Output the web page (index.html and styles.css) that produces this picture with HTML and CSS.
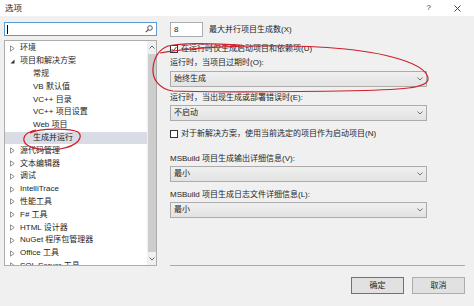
FILE: index.html
```html
<!DOCTYPE html>
<html>

<head>
  <meta charset="utf-8">
  <title>选项</title>
  <link rel="stylesheet" href="styles.css">
</head>

<body>

  <header class="titlebar">
    <span class="title">选项</span>
    <span class="help">?</span>
    <svg class="close" width="7" height="7" viewBox="0 0 7 7">
      <path d="M0.5 0.5L6.5 6.5M6.5 0.5L0.5 6.5" stroke="#333" stroke-width="0.9" fill="none" />
    </svg>
  </header>

  <div class="content">
    <aside class="sidebar">
      <div class="search">
        <span class="caret"></span>
        <svg width="8" height="8" viewBox="0 0 8 8">
          <circle cx="5" cy="3" r="2.3" stroke="#444" stroke-width="0.9" fill="none" />
          <path d="M3.4 4.6L0.8 7.2" stroke="#444" stroke-width="1.1" />
        </svg>
      </div>

      <div class="tree">
        <ul class="nodes">
          <li class="node"><span class="twisty"><svg width="5" height="7" viewBox="0 0 5 7"><path d="M0.5 0.8L4.2 3.5L0.5 6.2Z" fill="none" stroke="#777" stroke-width="0.8" /></svg></span>环境</li>
          <li class="node"><span class="twisty"><svg width="5" height="5" viewBox="0 0 5 5"><path d="M4.5 0.5L4.5 4.5L0.5 4.5Z" fill="#333" /></svg></span>项目和解决方案</li>
          <li class="node child">常规</li>
          <li class="node child">VB 默认值</li>
          <li class="node child">VC++ 目录</li>
          <li class="node child">VC++ 项目设置</li>
          <li class="node child">Web 项目</li>
          <li class="node child selected">生成并运行</li>
          <li class="node"><span class="twisty"><svg width="5" height="7" viewBox="0 0 5 7"><path d="M0.5 0.8L4.2 3.5L0.5 6.2Z" fill="none" stroke="#777" stroke-width="0.8" /></svg></span>源代码管理</li>
          <li class="node"><span class="twisty"><svg width="5" height="7" viewBox="0 0 5 7"><path d="M0.5 0.8L4.2 3.5L0.5 6.2Z" fill="none" stroke="#777" stroke-width="0.8" /></svg></span>文本编辑器</li>
          <li class="node"><span class="twisty"><svg width="5" height="7" viewBox="0 0 5 7"><path d="M0.5 0.8L4.2 3.5L0.5 6.2Z" fill="none" stroke="#777" stroke-width="0.8" /></svg></span>调试</li>
          <li class="node"><span class="twisty"><svg width="5" height="7" viewBox="0 0 5 7"><path d="M0.5 0.8L4.2 3.5L0.5 6.2Z" fill="none" stroke="#777" stroke-width="0.8" /></svg></span>IntelliTrace</li>
          <li class="node"><span class="twisty"><svg width="5" height="7" viewBox="0 0 5 7"><path d="M0.5 0.8L4.2 3.5L0.5 6.2Z" fill="none" stroke="#777" stroke-width="0.8" /></svg></span>性能工具</li>
          <li class="node"><span class="twisty"><svg width="5" height="7" viewBox="0 0 5 7"><path d="M0.5 0.8L4.2 3.5L0.5 6.2Z" fill="none" stroke="#777" stroke-width="0.8" /></svg></span>F# 工具</li>
          <li class="node"><span class="twisty"><svg width="5" height="7" viewBox="0 0 5 7"><path d="M0.5 0.8L4.2 3.5L0.5 6.2Z" fill="none" stroke="#777" stroke-width="0.8" /></svg></span>HTML 设计器</li>
          <li class="node"><span class="twisty"><svg width="5" height="7" viewBox="0 0 5 7"><path d="M0.5 0.8L4.2 3.5L0.5 6.2Z" fill="none" stroke="#777" stroke-width="0.8" /></svg></span>NuGet 程序包管理器</li>
          <li class="node"><span class="twisty"><svg width="5" height="7" viewBox="0 0 5 7"><path d="M0.5 0.8L4.2 3.5L0.5 6.2Z" fill="none" stroke="#777" stroke-width="0.8" /></svg></span>Office 工具</li>
          <li class="node"><span class="twisty"><svg width="5" height="7" viewBox="0 0 5 7"><path d="M0.5 0.8L4.2 3.5L0.5 6.2Z" fill="none" stroke="#777" stroke-width="0.8" /></svg></span>SQL Server 工具</li>
        </ul>
        <div class="scrollbar">
          <span class="arrow"><svg width="6" height="4" viewBox="0 0 6 4"><path d="M0.5 3.5L3 1L5.5 3.5" fill="none" stroke="#555" stroke-width="0.9" /></svg></span>
          <span class="thumb"></span>
          <span class="arrow"><svg width="6" height="4" viewBox="0 0 6 4"><path d="M0.5 0.5L3 3L5.5 0.5" fill="none" stroke="#555" stroke-width="0.9" /></svg></span>
        </div>
      </div>
    </aside>

    <section class="pane">
      <div class="settings">
        <div class="field">
          <span class="spin">8</span>
          <span>最大并行项目生成数(X)</span>
        </div>

        <label class="check first">
          <span class="box"><svg width="6" height="6" viewBox="0 0 6 6"><path d="M0.6 3L2.3 4.8L5.4 1" fill="none" stroke="#222" stroke-width="0.9" /></svg></span>
          在运行时仅生成启动项目和依赖项(U)
        </label>

        <div class="group first">
          <div class="label">运行时，当项目过期时(O):</div>
          <div class="combo">始终生成<svg width="6" height="4" viewBox="0 0 6 4"><path d="M0.5 0.5L3 3L5.5 0.5" fill="none" stroke="#555" stroke-width="0.8" /></svg></div>
        </div>

        <div class="group">
          <div class="label">运行时，当出现生成或部署错误时(E):</div>
          <div class="combo">不启动<svg width="6" height="4" viewBox="0 0 6 4"><path d="M0.5 0.5L3 3L5.5 0.5" fill="none" stroke="#555" stroke-width="0.8" /></svg></div>
        </div>

        <label class="check">
          <span class="box"></span>
          对于新解决方案，使用当前选定的项目作为启动项目(N)
        </label>

        <div class="group spaced">
          <div class="label">MSBuild 项目生成输出详细信息(V):</div>
          <div class="combo">最小<svg width="6" height="4" viewBox="0 0 6 4"><path d="M0.5 0.5L3 3L5.5 0.5" fill="none" stroke="#555" stroke-width="0.8" /></svg></div>
        </div>

        <div class="group near">
          <div class="label">MSBuild 项目生成日志文件详细信息(L):</div>
          <div class="combo">最小<svg width="6" height="4" viewBox="0 0 6 4"><path d="M0.5 0.5L3 3L5.5 0.5" fill="none" stroke="#555" stroke-width="0.8" /></svg></div>
        </div>
      </div>
      <div class="rule"></div>
    </section>
  </div>

  <footer class="actions">
    <button class="btn default">确定</button>
    <button class="btn">取消</button>
  </footer>

  <!-- red pen marks drawn over the screenshot -->
  <svg class="marks" width="474" height="306" viewBox="0 0 474 306">
    <path d="M160 53 C 200 46, 280 43, 345 49 C 395 54, 428 66, 428 79 C 428 88, 405 90, 340 91 C 270 92, 205 92, 173 91 C 159 89, 152 79, 153 68 C 154 58, 158 50, 168 46 C 185 42, 215 44, 240 45"
      fill="none" stroke="#cf1f2b" stroke-width="1.2" />
    <path d="M30 133 C 40 128, 70 128, 78 132 C 84 137, 78 146, 60 149 C 42 151, 26 148, 24 141 C 23 136, 27 132, 36 130"
      fill="none" stroke="#cf1f2b" stroke-width="1.2" />
  </svg>

</body>

</html>
```

FILE: styles.css
```css
* {
  box-sizing: border-box;
}

body {
  margin: 0;
  width: 474px;
  height: 306px;
  overflow: hidden;
  position: relative;
  background: #f0f0f0;
  color: #1e1e1e;
  font-family: "Liberation Sans", "Noto Sans CJK SC", sans-serif;
  font-size: 8px;
  line-height: 12px;
}

.titlebar {
  height: 16px;
  background: #fff;
  display: flex;
  align-items: center;
  padding-left: 5px;
}

.title {
  flex: 1;
  font-size: 8.5px;
}

.help {
  margin-right: 23px;
  color: #333;
}

.close {
  margin-right: 13px;
}

.content {
  display: flex;
  height: 244px;
  margin-top: 6px;
}

.sidebar {
  width: 153px;
  margin-left: 4px;
  display: flex;
  flex-direction: column;
  gap: 4px;
}

.search {
  height: 14px;
  border: 1px solid #5b9bd5;
  background: #fff;
  display: flex;
  align-items: center;
  justify-content: space-between;
  padding: 0 3px 0 2px;
}

.caret {
  width: 1px;
  height: 9px;
  background: #000;
}

.tree {
  flex: 1;
  border: 1px solid #adadad;
  background: #fff;
  display: flex;
  overflow: hidden;
}

.nodes {
  list-style: none;
  margin: 0;
  padding: 1px 0 0;
  flex: 1;
}

.node {
  height: 12.8px;
  display: flex;
  align-items: center;
  padding-left: 5px;
  white-space: nowrap;
}

.twisty {
  width: 10px;
  display: flex;
  align-items: center;
}

.node.child {
  padding-left: 28px;
}

.node.selected {
  background: #d9dbe5;
}

.scrollbar {
  width: 9px;
  background: #f0f0f0;
  display: flex;
  flex-direction: column;
  align-items: center;
}

.arrow {
  height: 12px;
  display: flex;
  align-items: center;
}

.thumb {
  flex: 1;
  width: 8px;
  background: #cdcdcd;
  margin: 1px 0;
}

.pane {
  flex: 1;
  margin: 0 9px 0 13px;
  display: flex;
  flex-direction: column;
}

.settings {
  width: 257px;
}

.rule {
  margin-top: auto;
  height: 1px;
  background: #a9a9a9;
}

.field {
  display: flex;
  align-items: center;
  gap: 6px;
}

.spin {
  width: 33px;
  height: 15px;
  border: 1px solid #abadb3;
  background: #fff;
  padding-left: 3px;
  display: flex;
  align-items: center;
}

.check {
  display: flex;
  align-items: center;
  gap: 3px;
  height: 12px;
  margin-top: 7px;
}

.check.first {
  margin-top: 6px;
}

.box {
  width: 8px;
  height: 8px;
  border: 1px solid #333;
  background: #fff;
  display: flex;
  align-items: center;
  justify-content: center;
}

.group {
  margin-top: 5px;
}

.group.first {
  margin-top: 2px;
}

.group.spaced {
  margin-top: 13px;
}

.group.near {
  margin-top: 7px;
}

.label {
  height: 12px;
  white-space: nowrap;
}

.combo {
  height: 16px;
  margin-top: 1px;
  border: 1px solid #acacac;
  background: linear-gradient(#efefef, #e3e3e3);
  display: flex;
  align-items: center;
  justify-content: space-between;
  padding: 0 3px;
}

.group.first .combo {
  margin-top: 2px;
}

.actions {
  display: flex;
  justify-content: flex-end;
  gap: 8px;
  padding: 11px 9px 0 0;
}

.btn {
  width: 53px;
  height: 17px;
  border: 1px solid #adadad;
  background: #e1e1e1;
  color: #1e1e1e;
  font: inherit;
  padding: 0;
}

.btn.default {
  border-color: #3a7ebf;
}

.marks {
  position: absolute;
  top: 0;
  left: 0;
  pointer-events: none;
}
```
